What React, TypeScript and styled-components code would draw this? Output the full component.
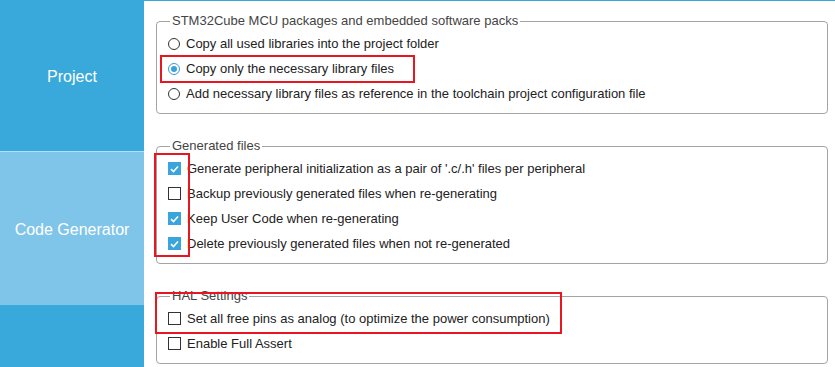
import * as React from 'react';
import styled, { createGlobalStyle } from 'styled-components';

const GlobalStyle = createGlobalStyle`
  html, body {
    margin: 0;
    padding: 0;
    background: #ffffff;
  }
  body {
    font-family: 'Liberation Sans', Arial, sans-serif;
  }
`;

const Page = styled.div`
  position: relative;
  display: flex;
  width: 835px;
  height: 367px;
  overflow: hidden;
`;

const Sidebar = styled.div`
  width: 144px;
  flex: none;
  display: flex;
  flex-direction: column;
  background: #39a9db;
`;

const NavItem = styled.div<{ $active?: boolean; $height: number }>`
  height: ${props => props.$height}px;
  flex: none;
  display: flex;
  align-items: center;
  justify-content: center;
  padding-top: 3px;
  box-sizing: border-box;
  background: ${props => (props.$active ? '#7fc5e9' : '#39a9db')};
  color: #ffffff;
  font-size: 16px;
`;

const NavDivider = styled.div`
  height: 1px;
  flex: none;
  background: #b3def3;
`;

const Content = styled.div`
  flex: 1;
  display: flex;
  flex-direction: column;
  gap: 24px;
  padding: 12px 7px 0 12px;
  border-top: 1px solid #39a9db;
  box-sizing: border-box;
`;

const Group = styled.fieldset`
  margin: 0;
  padding: 2px 0 7px 11px;
  border: 1px solid #a3a3a3;
  border-radius: 4px;
  min-width: 0;
`;

const GroupTitle = styled.legend`
  margin-left: 2px;
  padding: 0 2px 0 2px;
  font-size: 13px;
  line-height: 16px;
  color: #444444;
`;

const OptionRow = styled.label`
  height: 25px;
  display: flex;
  align-items: center;
  gap: 6px;
  font-size: 13px;
  color: #222222;
`;

const Radio = styled.span<{ $checked?: boolean }>`
  width: 12px;
  height: 12px;
  box-sizing: border-box;
  border-radius: 50%;
  border: 1px solid ${props => (props.$checked ? '#3c9ad6' : '#333333')};
  background: #ffffff;
  display: flex;
  align-items: center;
  justify-content: center;
  flex: none;
  &::after {
    content: '';
    display: ${props => (props.$checked ? 'block' : 'none')};
    width: 6px;
    height: 6px;
    border-radius: 50%;
    background: #3aa0dc;
  }
`;

const Check = styled.span<{ $checked?: boolean }>`
  width: 13px;
  height: 13px;
  box-sizing: border-box;
  border: 1px solid ${props => (props.$checked ? '#3aa4dc' : '#333333')};
  background: ${props => (props.$checked ? '#3aa4dc' : '#ffffff')};
  display: flex;
  align-items: center;
  justify-content: center;
  flex: none;
`;

const Highlight = styled.div`
  position: absolute;
  border: 2px solid #e8161e;
  box-sizing: border-box;
  pointer-events: none;
`;

const Tick = () => (
  <svg width="9" height="8" viewBox="0 0 9 8">
    <path d="M1 4.2 L3.5 6.5 L8 1.5" fill="none" stroke="#ffffff" strokeWidth="1.6" />
  </svg>
);

const RadioOption: React.FC<{ label: string; checked?: boolean }> = ({ label, checked }) => (
  <OptionRow>
    <Radio $checked={checked} />
    {label}
  </OptionRow>
);

const CheckOption: React.FC<{ label: string; checked?: boolean }> = ({ label, checked }) => (
  <OptionRow>
    <Check $checked={checked}>{checked && <Tick />}</Check>
    {label}
  </OptionRow>
);

const App: React.FC = () => {
  return (
    <Page>
      <GlobalStyle />
      <Sidebar>
        <NavItem $height={151}>Project</NavItem>
        <NavDivider />
        <NavItem $active $height={153}>Code Generator</NavItem>
      </Sidebar>
      <Content>
        <Group>
          <GroupTitle>STM32Cube MCU packages and embedded software packs</GroupTitle>
          <RadioOption label="Copy all used libraries into the project folder" />
          <RadioOption checked label="Copy only the necessary library files" />
          <RadioOption label="Add necessary library files as reference in the toolchain project configuration file" />
        </Group>
        <Group>
          <GroupTitle>Generated files</GroupTitle>
          <CheckOption checked label="Generate peripheral initialization as a pair of '.c/.h' files per peripheral" />
          <CheckOption label="Backup previously generated files when re-generating" />
          <CheckOption checked label="Keep User Code when re-generating" />
          <CheckOption checked label="Delete previously generated files when not re-generated" />
        </Group>
        <Group>
          <GroupTitle>HAL Settings</GroupTitle>
          <CheckOption label="Set all free pins as analog (to optimize the power consumption)" />
          <CheckOption label="Enable Full Assert" />
        </Group>
      </Content>
      <Highlight style={{ left: 160, top: 55, width: 255, height: 28 }} />
      <Highlight style={{ left: 154, top: 153, width: 36, height: 104 }} />
      <Highlight style={{ left: 155, top: 292, width: 407, height: 42 }} />
    </Page>
  );
};

export default App;
